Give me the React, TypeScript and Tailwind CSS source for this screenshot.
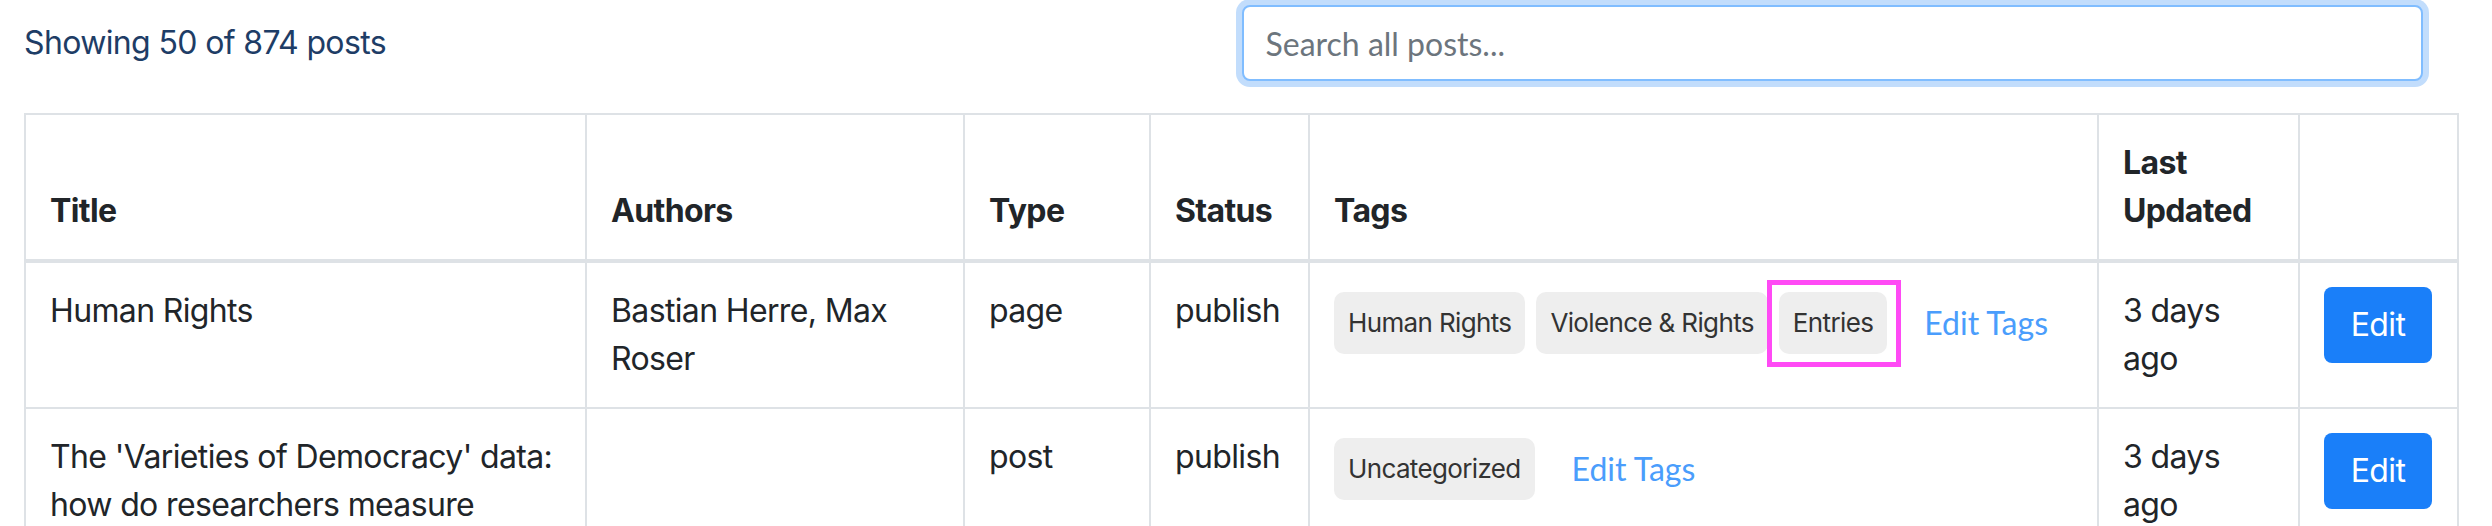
import React from 'react'

type Post = {
  title: string[]
  authors: string
  type: string
  status: string
  tags: string[]
  updated: string
}

const posts: Post[] = [
  {
    title: ['Human Rights'],
    authors: 'Bastian Herre, Max Roser',
    type: 'page',
    status: 'publish',
    tags: ['Human Rights', 'Violence & Rights', 'Entries'],
    updated: '3 days ago',
  },
  {
    title: ["The 'Varieties of Democracy' data:", 'how do researchers measure', 'democracy?'],
    authors: '',
    type: 'post',
    status: 'publish',
    tags: ['Uncategorized'],
    updated: '3 days ago',
  },
]

function Tag({ name, highlight }: { name: string; highlight?: boolean }) {
  return (
    <span className="relative inline-flex">
      <span className="h-[62px] px-[14px] flex items-center rounded-[10px] bg-[#eeeeee] text-[#333333] text-[26px] leading-none">
        {name}
      </span>
      {highlight && (
        <span className="absolute -left-[12px] -right-[14px] -top-[12px] -bottom-[13px] border-[5px] border-[#ff4af5] pointer-events-none" />
      )}
    </span>
  )
}

export default function App() {
  const th = 'px-[24px] py-[24px] align-bottom text-left font-bold border-x-2 border-t-2 border-b-4 border-[#dee2e6]'
  const td = 'px-[24px] py-[24px] align-top border-2 border-[#dee2e6]'

  return (
    <div className="min-h-screen bg-white pt-[5px] pl-[24px] text-[32px] leading-[48px] tracking-[-0.02em] text-[#212529] font-['Inter',sans-serif]">
      <div className="w-[2433px] grid grid-cols-2 items-center h-[76px]">
        <div className="text-[#1e3d66]">Showing 50 of 874 posts</div>
        <div className="pl-[1px]">
          <input
            placeholder="Search all posts..."
            className="w-[1181px] h-[76px] px-[22px] rounded-[8px] border-2 border-[#80bdff] shadow-[0_0_0_6px_#c2ddfc] outline-none bg-white text-[32px] tracking-normal font-['Lato',sans-serif] placeholder:text-[#6c757d]"
          />
        </div>
      </div>

      <table className="mt-[32px] w-[2433px] table-fixed border-collapse">
        <colgroup>
          <col className="w-[561px]" />
          <col className="w-[378px]" />
          <col className="w-[186px]" />
          <col className="w-[159px]" />
          <col className="w-[789px]" />
          <col className="w-[201px]" />
          <col className="w-[159px]" />
        </colgroup>
        <thead>
          <tr>
            <th className={th}>Title</th>
            <th className={th}>Authors</th>
            <th className={th}>Type</th>
            <th className={th}>Status</th>
            <th className={th}>Tags</th>
            <th className={th}>Last Updated</th>
            <th className={th}></th>
          </tr>
        </thead>
        <tbody>
          {posts.map((p, i) => (
            <tr key={i}>
              <td className={td}>
                {p.title.map((line) => (
                  <div key={line} className="whitespace-nowrap">{line}</div>
                ))}
              </td>
              <td className={td}>{p.authors}</td>
              <td className={td}>{p.type}</td>
              <td className={td}>{p.status}</td>
              <td className={td}>
                <div className="flex items-center pt-[5px]">
                  <div className="flex gap-[11px]">
                    {p.tags.map((t) => (
                      <Tag key={t} name={t} highlight={t === 'Entries'} />
                    ))}
                  </div>
                  <a className="ml-[37px] text-[#4a9dfc] tracking-normal font-['Lato',sans-serif] cursor-pointer">Edit Tags</a>
                </div>
              </td>
              <td className={td}>{p.updated}</td>
              <td className={td}>
                <button className="h-[76px] w-[108px] rounded-[8px] bg-[#1a7ff9] text-white">Edit</button>
              </td>
            </tr>
          ))}
        </tbody>
      </table>
    </div>
  )
}
